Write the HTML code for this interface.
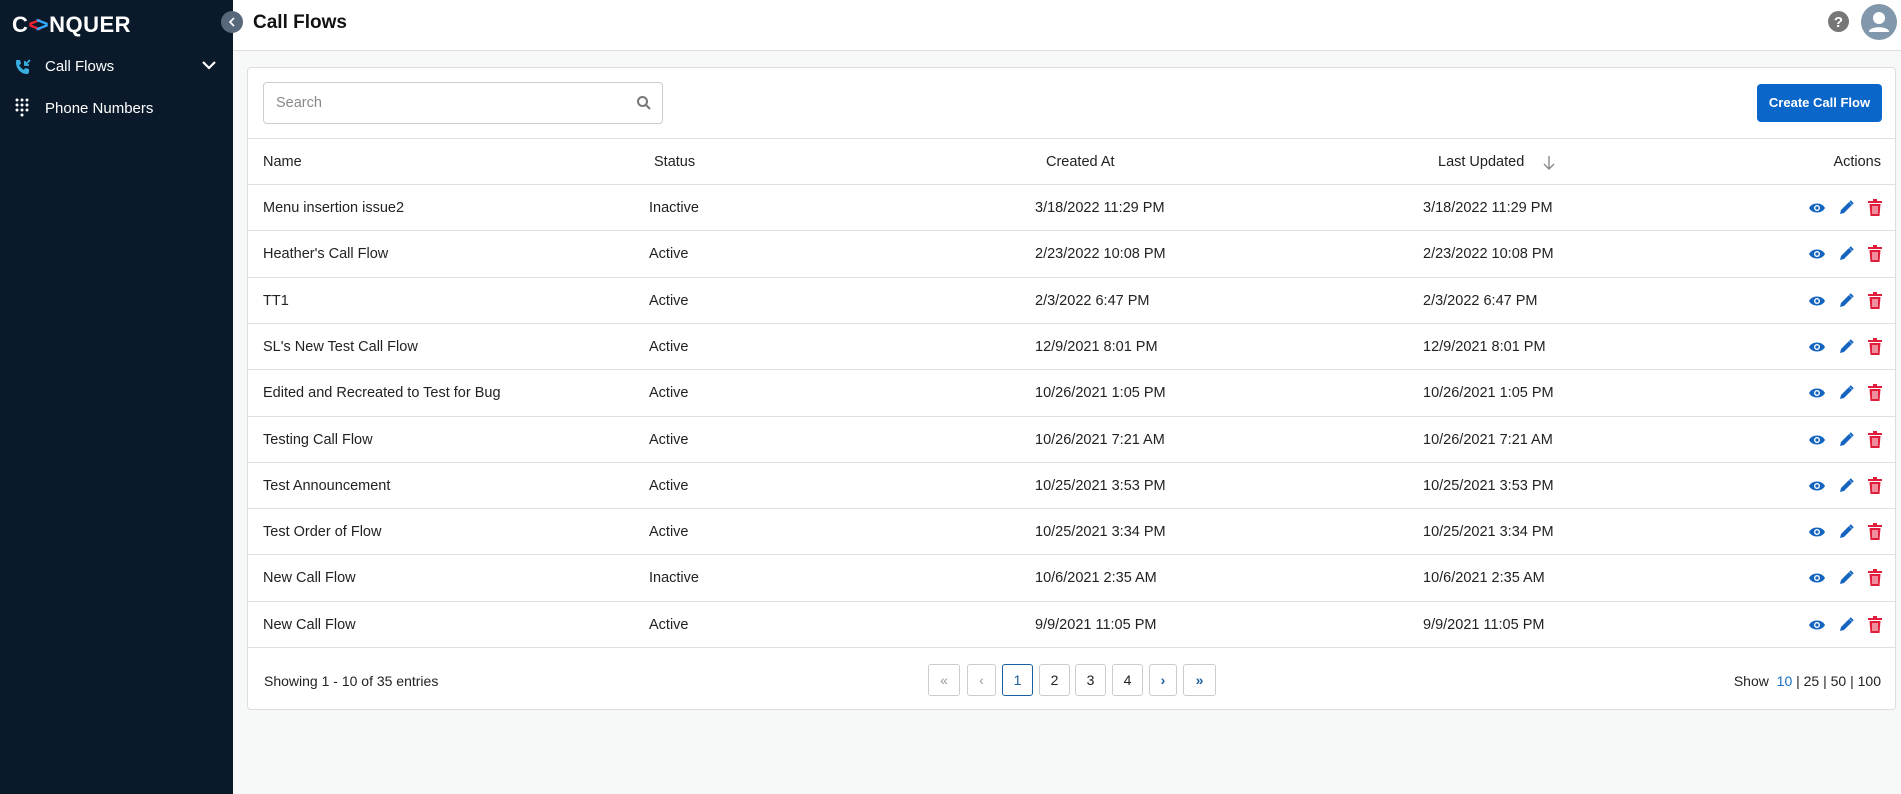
<!DOCTYPE html>
<html><head><meta charset="utf-8"><style>
*{box-sizing:border-box;margin:0;padding:0}
body{width:1901px;height:794px;overflow:hidden;background:#f7f8f8;font-family:"Liberation Sans",sans-serif;color:#222;position:relative}
.side{position:absolute;left:0;top:0;width:233px;height:794px;background:#0a1a2b}
.logo{position:absolute;left:12px;top:12px;color:#fff;font-weight:bold;font-size:22px;letter-spacing:0.5px}
.nav{position:absolute;left:45px;color:#fff;font-size:15px}
.top{position:absolute;left:233px;top:0;right:0;height:51px;background:#fff;border-bottom:1px solid #ddd}
.title{position:absolute;left:253px;top:12px;font-size:19px;font-weight:bold;color:#111}
.card{position:absolute;left:247px;top:67px;width:1649px;height:643px;background:#fff;border:1px solid #ddd;border-radius:4px}
.search{position:absolute;left:15px;top:14px;width:400px;height:42px;border:1px solid #ccc;border-radius:4px;color:#888;font-size:14.5px;padding:12px 12px}
.btn{position:absolute;right:13px;top:16px;width:125px;height:38px;background:#0b66c9;color:#fff;border-radius:4px;font-size:13px;font-weight:bold;text-align:center;line-height:38px}
.hl{position:absolute;left:0;right:0;height:1px;background:#e0e0e0}
.t{position:absolute;font-size:14.5px;white-space:nowrap}
.ic{position:absolute}
.pg{position:absolute;top:596px;height:32px;border:1px solid #ccc;border-radius:3px;font-size:14px;text-align:center;line-height:30px;color:#222}
</style></head><body>
<div class="side">
<div class="logo">C<span style="color:#e23">&lt;</span><span style="color:#3af;margin-left:-6px">&gt;</span>NQUER</div>
<svg class="ic" style="left:14px;top:58px" width="18" height="18" viewBox="0 0 18 18"><path d="M3 2l3 0 1 4-2 1c1 2 3 4 5 5l1-2 4 1v3c0 1-1 2-2 2C7 16 2 11 2 4c0-1 0-2 1-2z" fill="#3ab0e0"/><path d="M11 7l5-5M11 3v4h4" stroke="#3ab0e0" stroke-width="1.8" fill="none"/></svg>
<div class="nav" style="top:58px">Call Flows</div>
<svg class="ic" style="left:202px;top:60px" width="14" height="10"><path d="M1 2l6 6 6-6" stroke="#fff" stroke-width="2.2" fill="none"/></svg>
<svg class="ic" style="left:15px;top:98px" width="16" height="20"><g fill="#fff"><circle cx="2" cy="2" r="1.5"/><circle cx="7" cy="2" r="1.5"/><circle cx="12" cy="2" r="1.5"/><circle cx="2" cy="7" r="1.5"/><circle cx="7" cy="7" r="1.5"/><circle cx="12" cy="7" r="1.5"/><circle cx="2" cy="12" r="1.5"/><circle cx="7" cy="12" r="1.5"/><circle cx="12" cy="12" r="1.5"/><circle cx="7" cy="17" r="1.5"/></g></svg>
<div class="nav" style="top:100px">Phone Numbers</div>
</div>
<div class="top"></div>
<svg class="ic" style="left:221px;top:11px" width="22" height="22"><circle cx="11" cy="11" r="11" fill="#56687a"/><path d="M13 7l-4 4 4 4" stroke="#fff" stroke-width="1.6" fill="none"/></svg>
<div class="title">Call Flows</div>
<svg class="ic" style="left:1828px;top:11px" width="21" height="21"><circle cx="10.5" cy="10.5" r="10.5" fill="#777"/><text x="10.5" y="16" font-size="15" font-weight="bold" fill="#fff" text-anchor="middle" font-family="Liberation Sans">?</text></svg>
<svg class="ic" style="left:1861px;top:4px" width="36" height="36"><circle cx="18" cy="18" r="18" fill="#8197ab"/><circle cx="18" cy="14" r="6" fill="#fff"/><path d="M8 27c2-5 18-5 20 0v1H8z" fill="#fff"/></svg>
<div class="card">
<div class="search">Search</div>
<svg class="ic" style="left:388px;top:27px" width="16" height="16"><circle cx="6.5" cy="6.5" r="4.5" stroke="#777" stroke-width="2" fill="none"/><path d="M10 10l4 4" stroke="#777" stroke-width="2"/></svg>
<div class="btn">Create Call Flow</div>
<div class="hl" style="top:70px"></div>
<div class="t" style="left:15px;top:86px">Name</div>
<div class="t" style="left:406px;top:86px">Status</div>
<div class="t" style="left:798px;top:86px">Created At</div>
<div class="t" style="left:1190px;top:86px">Last Updated</div>
<svg class="ic" style="left:1295px;top:87px" width="12" height="16"><path d="M6 1v13M1 9l5 5 5-5" stroke="#888" stroke-width="1.4" fill="none"/></svg>
<div class="t" style="right:14px;top:86px">Actions</div>
<div class="hl" style="top:116px"></div>
<div id="rows"></div>
<div class="t" style="left:16px;top:605px;font-size:14px">Showing 1 - 10 of 35 entries</div>
<div class="pg" style="left:680px;width:32px;color:#999">«</div>
<div class="pg" style="left:719px;width:29px;color:#999">‹</div>
<div class="pg" style="left:754px;width:31px;border-color:#1a5fa0;color:#1a5fa0">1</div>
<div class="pg" style="left:791px;width:31px">2</div>
<div class="pg" style="left:827px;width:31px">3</div>
<div class="pg" style="left:864px;width:31px">4</div>
<div class="pg" style="left:901px;width:28px;color:#1a5fa0;font-weight:bold">›</div>
<div class="pg" style="left:935px;width:33px;color:#1a5fa0;font-weight:bold">»</div>
<div class="t" style="right:14px;top:605px;font-size:14px">Show &nbsp;<span style="color:#1a6fc0">10</span> | 25 | 50 | 100</div>
</div>
<script>
var d=[["Menu insertion issue2","Inactive","3/18/2022 11:29 PM"],["Heather's Call Flow","Active","2/23/2022 10:08 PM"],["TT1","Active","2/3/2022 6:47 PM"],["SL's New Test Call Flow","Active","12/9/2021 8:01 PM"],["Edited and Recreated to Test for Bug","Active","10/26/2021 1:05 PM"],["Testing Call Flow","Active","10/26/2021 7:21 AM"],["Test Announcement","Active","10/25/2021 3:53 PM"],["Test Order of Flow","Active","10/25/2021 3:34 PM"],["New Call Flow","Inactive","10/6/2021 2:35 AM"],["New Call Flow","Active","9/9/2021 11:05 PM"]];
var h="";d.forEach(function(r,i){var y=116+i*46.3;var ty=y+16;
h+='<div class="t" style="left:15px;top:'+ty+'px">'+r[0]+'</div><div class="t" style="left:401px;top:'+ty+'px">'+r[1]+'</div><div class="t" style="left:787px;top:'+ty+'px">'+r[2]+'</div><div class="t" style="left:1175px;top:'+ty+'px">'+r[2]+'</div>';
var iy=y+17;
h+='<svg class="ic" style="left:1560px;top:'+iy+'px" width="18" height="14"><path d="M1 7C4 1 14 1 17 7 14 13 4 13 1 7z" fill="#1565c0"/><circle cx="9" cy="7" r="3" fill="#fff"/><circle cx="9" cy="7" r="1.6" fill="#1565c0"/></svg>';
h+='<svg class="ic" style="left:1591px;top:'+(iy-1)+'px" width="15" height="15"><path d="M1 14l1-4 8-8 3 3-8 8z" fill="#1565c0"/><path d="M11 1l3 3" stroke="#1565c0" stroke-width="2"/></svg>';
h+='<svg class="ic" style="left:1620px;top:'+(iy-2)+'px" width="14" height="17"><rect x="0" y="2" width="14" height="2" fill="#e01e3c"/><rect x="5" y="0" width="4" height="2" fill="#e01e3c"/><path d="M1.5 5h11l-1 12h-9z" fill="#e01e3c"/><path d="M5 7v8M7 7v8M9 7v8" stroke="#fff" stroke-width="1"/></svg>';
h+='<div class="hl" style="top:'+(y+46.3)+'px"></div>';});
document.getElementById("rows").innerHTML=h;
</script>
</body></html>
